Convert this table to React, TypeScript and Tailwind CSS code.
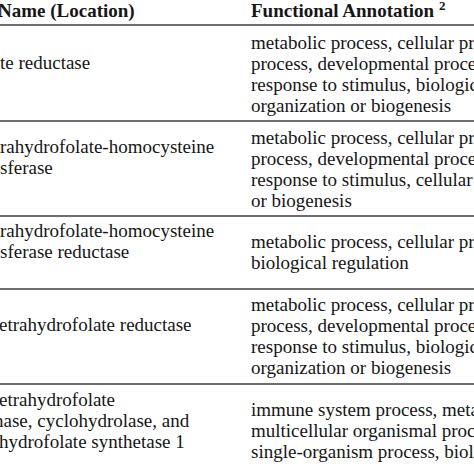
import * as React from 'react';

interface Row {
  height: string;
  leftPad: string;
  rightPad: string;
  left: { text: string; shift: string }[];
  right: string[];
}

const rows: Row[] = [
  {
    height: 'h-[94px]',
    leftPad: 'pt-[26px]',
    rightPad: 'pt-[6px]',
    left: [{ text: 'te reductase', shift: 'ml-0' }],
    right: [
      'metabolic process, cellular process, single-organism',
      'process, developmental process, localization,',
      'response to stimulus, biological regulation, cellular component',
      'organization or biogenesis',
    ],
  },
  {
    height: 'h-[93px]',
    leftPad: 'pt-[14px]',
    rightPad: 'pt-[5px]',
    left: [
      { text: 'rahydrofolate-homocysteine', shift: 'ml-0' },
      { text: 'sferase', shift: 'ml-0' },
    ],
    right: [
      'metabolic process, cellular process, single-organism',
      'process, developmental process, localization,',
      'response to stimulus, cellular component organization',
      'or biogenesis',
    ],
  },
  {
    height: 'h-[71px]',
    leftPad: 'pt-[3px]',
    rightPad: 'pt-[14px]',
    left: [
      { text: 'rahydrofolate-homocysteine', shift: 'ml-0' },
      { text: 'sferase reductase', shift: 'ml-0' },
    ],
    right: ['metabolic process, cellular process,', 'biological regulation'],
  },
  {
    height: 'h-[93px]',
    leftPad: 'pt-[24px]',
    rightPad: 'pt-[4px]',
    left: [{ text: 'etrahydrofolate reductase', shift: '-ml-[1px]' }],
    right: [
      'metabolic process, cellular process, single-organism',
      'process, developmental process, localization,',
      'response to stimulus, biological regulation, cellular component',
      'organization or biogenesis',
    ],
  },
  {
    height: 'h-[89px]',
    leftPad: 'pt-[4px]',
    rightPad: 'pt-[14px]',
    left: [
      { text: 'etrahydrofolate', shift: '-ml-[1px]' },
      { text: 'nase, cyclohydrolase, and', shift: '-ml-[6px]' },
      { text: 'hydrofolate synthetase 1', shift: '-ml-[1px]' },
    ],
    right: [
      'immune system process, metabolic process,',
      'multicellular organismal process, cellular process,',
      'single-organism process, biological regulation',
    ],
  },
];

function Rule() {
  return <div className="h-[2px] w-full bg-[#6e6e6e]" />;
}

export default function App() {
  return (
    <div className="w-[474px] h-[474px] overflow-hidden bg-white text-[#161616] font-['Liberation_Serif',serif] text-[19px] leading-[21px] whitespace-nowrap">
      <div className="flex h-[24px] font-bold">
        <div className="w-[251px] shrink-0 overflow-hidden">
          <div className="-ml-[2px]">Name (Location)</div>
        </div>
        <div className="flex-1">
          Functional Annotation{' '}
          <sup className="text-[13px] -top-[7px]">2</sup>
        </div>
      </div>
      {rows.map((row, i) => (
        <React.Fragment key={i}>
          <Rule />
          <div className={`flex ${row.height}`}>
            <div className={`w-[251px] shrink-0 overflow-hidden ${row.leftPad}`}>
              {row.left.map((line, j) => (
                <div key={j} className={line.shift}>
                  {line.text}
                </div>
              ))}
            </div>
            <div className={`flex-1 ${row.rightPad}`}>
              {row.right.map((line, j) => (
                <div key={j}>{line}</div>
              ))}
            </div>
          </div>
        </React.Fragment>
      ))}
    </div>
  );
}
